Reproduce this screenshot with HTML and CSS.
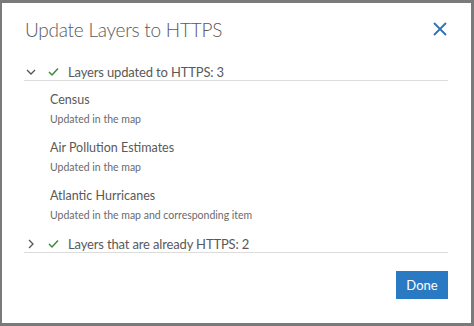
FILE: index.html
```html
<!DOCTYPE html>
<html lang="en">
<head>
    <meta charset="UTF-8">
    <meta name="viewport" content="width=device-width, initial-scale=1.0">
    <title>Update Layers to HTTPS</title>
    <link rel="stylesheet" href="styles.css">
</head>
<body>
    <div class="dialog">
        <div class="dialog-header">
            <h1 class="dialog-title">Update Layers to HTTPS</h1>
            <button class="close-btn" aria-label="Close">
                <svg width="14" height="14" viewBox="0 0 14 14">
                    <path d="M1 1 L13 13 M13 1 L1 13" stroke="#2e72b5" stroke-width="1.8" fill="none"/>
                </svg>
            </button>
        </div>

        <div class="section">
            <div class="section-head">
                <svg class="chevron" width="10" height="10" viewBox="0 0 10 10">
                    <path d="M1 3 L5 7 L9 3" stroke="#555" stroke-width="1.3" fill="none"/>
                </svg>
                <svg class="check" width="11" height="10" viewBox="0 0 11 10">
                    <path d="M1 5 L4 8 L10 1.5" stroke="#3a8a3a" stroke-width="1.5" fill="none"/>
                </svg>
                <span class="section-label">Layers updated to HTTPS: 3</span>
            </div>
            <ul class="layer-list">
                <li class="layer">
                    <div class="layer-name">Census</div>
                    <div class="layer-note">Updated in the map</div>
                </li>
                <li class="layer">
                    <div class="layer-name">Air Pollution Estimates</div>
                    <div class="layer-note">Updated in the map</div>
                </li>
                <li class="layer">
                    <div class="layer-name">Atlantic Hurricanes</div>
                    <div class="layer-note">Updated in the map and corresponding item</div>
                </li>
            </ul>
        </div>

        <div class="section">
            <div class="section-head">
                <svg class="chevron" width="10" height="10" viewBox="0 0 10 10">
                    <path d="M3 1 L7 5 L3 9" stroke="#555" stroke-width="1.3" fill="none"/>
                </svg>
                <svg class="check" width="11" height="10" viewBox="0 0 11 10">
                    <path d="M1 5 L4 8 L10 1.5" stroke="#3a8a3a" stroke-width="1.5" fill="none"/>
                </svg>
                <span class="section-label">Layers that are already HTTPS: 2</span>
            </div>
        </div>

        <div class="dialog-footer">
            <button class="btn-done">Done</button>
        </div>
    </div>
</body>
</html>
```

FILE: styles.css
```css
body {
    margin: 0;
    height: 326px;
    background-color: #7a7a7a;
    font-family: 'Lato', 'Open Sans', sans-serif;
    color: #595959;
    overflow: hidden;
}

.dialog {
    box-sizing: border-box;
    height: 320px;
    margin: 3px 3px 0 2px;
    background-color: #fff;
    padding: 0 23px 0 22px;
}

.dialog-header {
    display: flex;
    justify-content: space-between;
    align-items: center;
    height: 57px;
}

.dialog-title {
    margin: 0 0 5px 1px;
    font-size: 19px;
    font-weight: 300;
    color: #595959;
    letter-spacing: -0.25px;
}

.close-btn {
    border: none;
    background: none;
    padding: 0;
    margin: 0 1px 5px 0;
    width: 14px;
    height: 14px;
    cursor: pointer;
}

/* collapsible section rows */
.section-head {
    box-sizing: border-box;
    display: flex;
    align-items: center;
    height: 21px;
    padding: 3px 0 0 2px;
    border-bottom: 1px solid #dcdcdc;
}

.chevron {
    margin-right: 12px;
}

.check {
    margin-right: 9px;
}

.section-label {
    font-size: 13px;
    line-height: 18px;
    letter-spacing: -0.15px;
    color: #595959;
}

.layer-list {
    list-style: none;
    margin: 0;
    padding: 10px 0 10px 26px;
}

.layer {
    margin-bottom: 13px;
}

.layer:last-child {
    margin-bottom: 0;
}

.layer-name {
    font-size: 12.5px;
    line-height: 18px;
    color: #595959;
}

.layer-note {
    font-size: 10.5px;
    line-height: 14px;
    margin-top: 3px;
    color: #6a6a6a;
}

.dialog-footer {
    display: flex;
    justify-content: flex-end;
    padding-top: 18px;
}

.btn-done {
    background-color: #2a7ac3;
    color: #fff;
    border: none;
    font-family: inherit;
    font-size: 13px;
    width: 52px;
    height: 28px;
    cursor: pointer;
}
```
